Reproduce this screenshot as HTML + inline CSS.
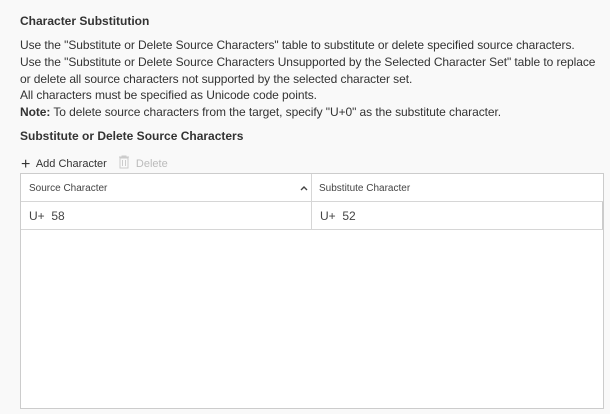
<!DOCTYPE html>
<html><head><style>
html,body{margin:0;padding:0;}
body{width:610px;height:414px;background:#f9f9f9;font-family:"Liberation Sans",sans-serif;color:#333;position:relative;overflow:hidden;}
.t{position:absolute;left:20px;white-space:nowrap;}
.h{font-weight:bold;font-size:12px;}
.p{font-size:12px;line-height:16.8px;top:37px;letter-spacing:-0.07px;}
.tb{position:absolute;left:20px;top:173px;width:582px;height:234px;border:1px solid #ccc;background:#fff;}
.hd{position:absolute;left:0;top:0;width:582px;height:27px;border-bottom:1px solid #d6d6d6;}
.rw{position:absolute;left:0;top:28px;width:581px;height:27px;border-bottom:1px solid #d6d6d6;border-right:1px solid #ccc;}
.col{position:absolute;left:290px;top:0;width:1px;height:55px;background:#d6d6d6;}
.c{position:absolute;font-size:10px;color:#444;top:9px;}
.v{position:absolute;font-size:12px;color:#444;top:7px;}
</style></head><body>
<div class="t h" style="top:14px;">Character Substitution</div>
<div class="t p">Use the "Substitute or Delete Source Characters" table to substitute or delete specified source characters.<br>Use the "Substitute or Delete Source Characters Unsupported by the Selected Character Set" table to replace<br>or delete all source characters not supported by the selected character set.<br>All characters must be specified as Unicode code points.<br><b>Note:</b> To delete source characters from the target, specify "U+0" as the substitute character.</div>
<div class="t h" style="top:129px;">Substitute or Delete Source Characters</div>
<div class="t" style="top:153px;font-size:11px;left:21px;"><span style="font-size:16px;position:relative;top:2px;">+</span>&nbsp; Add Character
<svg width="12" height="14" viewBox="0 0 12 14" style="position:relative;top:2px;margin-left:8px;"><path d="M1 2h10M4 2V1h4v1M2 3h8v10H2zM4.5 5v6M7.5 5v6" stroke="#ccc" fill="none"/></svg>
<span style="color:#bbb;margin-left:3px;">Delete</span></div>
<div class="tb">
<div class="hd"><div class="c" style="left:8px;">Source Character</div>
<svg width="8" height="6" viewBox="0 0 8 6" style="position:absolute;left:279px;top:11px;"><path d="M1 5l3-3 3 3" stroke="#444" stroke-width="1.4" fill="none"/></svg>
<div class="c" style="left:298px;">Substitute Character</div></div>
<div class="rw"><div class="v" style="left:8px;">U+&nbsp; 58</div><div class="v" style="left:299px;">U+&nbsp; 52</div></div>
<div class="col"></div>
</div>
</body></html>
